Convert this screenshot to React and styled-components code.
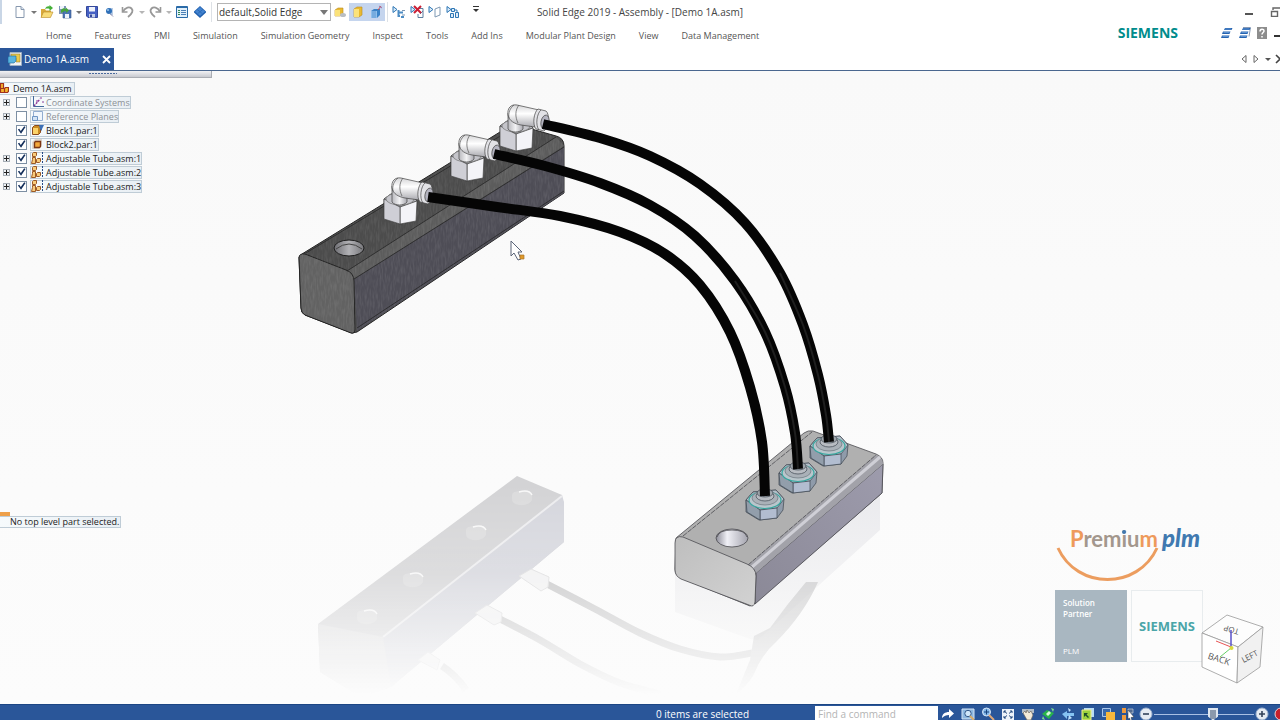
import React from "react";
import styled, { createGlobalStyle, css } from "styled-components";

const GlobalStyle = createGlobalStyle`
  *, *::before, *::after {
    box-sizing: border-box;
  }
  body {
    margin: 0;
    background: #fff;
    color: #444;
    font-family: "Open Sans", "Noto Sans", sans-serif;
    font-size: 9px;
  }
  button {
    margin: 0;
    padding: 0;
    border: 0;
    background: none;
    font: inherit;
    color: inherit;
  }
  svg {
    display: block;
    flex: none;
  }
`;

const Page = styled.div`
  display: flex;
  flex-direction: column;
  min-height: 100vh;
  overflow: hidden;
`;

/* ---------- title bar ---------- */

const TitleBar = styled.header`
  display: grid;
  grid-template-columns: 1fr auto 1fr;
  align-items: center;
  height: 24px;
`;

const QuickAccess = styled.div`
  display: flex;
  align-items: center;
`;

const AppEdge = styled.span`
  width: 2px;
  height: 24px;
  margin-right: 9px;
  background: #c9d6e6;
`;

const ToolButton = styled.button`
  display: flex;
  align-items: center;
  justify-content: center;
  width: ${p => p.$w || 18}px;
  height: 18px;
`;

const Caret = styled.span`
  border: 3px solid transparent;
  border-top-color: ${p => p.$color || "#777"};
  border-bottom: 0;
`;

const Divider = styled.span`
  width: 1px;
  height: 20px;
  margin: 0 2px;
  background: #dde1e6;
`;

const ConfigBox = styled.label`
  position: relative;
  display: block;
  margin-left: 3px;

  &::after {
    content: "";
    position: absolute;
    right: 3px;
    top: 7px;
    border: 4px solid transparent;
    border-top: 5px solid #777;
    border-bottom: 0;
  }
`;

const ConfigSelect = styled.select`
  appearance: none;
  display: block;
  width: 114px;
  height: 18px;
  padding: 0 1px;
  border: 1px solid #b4b4b4;
  border-radius: 0;
  background: #fff;
  color: #333;
  font-family: inherit;
  font-size: 10px;
`;

const ActivePair = styled.div`
  display: flex;
  background: #c5d5ee;
`;

const Title = styled.h1`
  margin: 0;
  font-size: 10px;
  font-weight: 400;
  line-height: 14px;
  color: #444;
`;

const Controls = styled.div`
  display: flex;
  align-items: center;
  justify-content: flex-end;
  margin-left: auto;
`;

/* ---------- ribbon tabs ---------- */

const Ribbon = styled.div`
  display: flex;
  align-items: center;
  height: 23px;
  padding-left: 46px;
`;

const RibbonNav = styled.nav`
  display: flex;
  gap: 23px;
`;

const RibbonLink = styled.a`
  color: #555;
  font-size: 9px;
  line-height: 14px;
  text-decoration: none;
  white-space: nowrap;
`;

const Brand = styled.span`
  color: ${p => p.$color || "#008c8c"};
  font-size: ${p => p.$size || 14}px;
  font-weight: 700;
  line-height: 16px;
`;

const RibbonRight = styled(Controls)`
  align-self: flex-start;
  gap: 7px;
`;

const BrandSlot = styled.div`
  margin-right: 36px;
`;

/* ---------- document tabs ---------- */

const TabBar = styled.div`
  display: flex;
  align-items: stretch;
  height: 24px;
  padding-top: 1px;
  border-bottom: 1px solid #4a678f;
`;

const DocTab = styled.div`
  display: flex;
  align-items: center;
  gap: 2px;
  width: 114px;
  padding: 0 3px 0 8px;
  background: #2a5699;
  color: #fff;
  font-size: 10px;
`;

const DocName = styled.span`
  flex: 1;
  white-space: nowrap;
`;

/* ---------- 3d view ---------- */

const Viewport = styled.main`
  position: relative;
  flex: 1;
  display: grid;
  background: linear-gradient(#f9f9f9, #fcfcfc);
`;

const SceneSvg = styled.svg`
  grid-area: 1 / 1;
  width: 100%;
  height: 100%;
`;

const PathFinder = styled.aside`
  position: absolute;
  left: 0;
  top: 0;
`;

const PanelGrip = styled.div`
  display: flex;
  justify-content: center;
  width: 212px;
  height: 7px;
  padding: 2px 6px 0 0;
  border: 1px solid #aaadb3;
  border-width: 0 1px 1px 0;
  background: linear-gradient(#f2f2f4, #c8cad0);

  &::before {
    content: "";
    width: 28px;
    height: 1px;
    background: repeating-linear-gradient(90deg, #4a6a9c 0 2px, transparent 2px 3px);
  }
`;

const labelBox = css`
  border: 1px solid #bfccd6;
  background: linear-gradient(90deg, #f6fafc, #e9eff4);
`;

const Tree = styled.ul`
  margin: 3px 0 0;
  padding: 0;
  list-style: none;
`;

const TreeRow = styled.li`
  display: flex;
  align-items: center;
  height: 14px;
`;

const Expander = styled.button`
  display: flex;
  align-items: center;
  justify-content: center;
  width: 7px;
  height: 7px;
  margin: 0 6px 0 3px;
  visibility: ${p => (p.$hidden ? "hidden" : "visible")};
  border: 1px solid #a5adb5;
  background: #eef1f4;
`;

const Tick = styled.input`
  appearance: none;
  display: block;
  width: 11px;
  height: 11px;
  margin: 0 3px 0 0;
  border: 1px solid #7d8fa3;
  background: #fff;

  &:checked::after {
    content: "";
    display: block;
    width: 9px;
    height: 9px;
    background: #16305c;
    clip-path: polygon(10% 45%, 25% 35%, 42% 60%, 80% 8%, 95% 18%, 45% 92%);
  }
`;

const TreeLabel = styled.label`
  ${labelBox}
  display: flex;
  align-items: center;
  gap: 2px;
  height: 13px;
  padding: 0;
  color: ${p => (p.$dim ? "#8d9196" : "#222")};
  font-size: 9px;
  line-height: 11px;
  white-space: nowrap;
`;

const RootLabel = styled(TreeLabel)`
  gap: 4px;
  padding-right: 2px;
  border-left: 0;
`;

const Prompt = styled.div`
  position: absolute;
  left: 0;
  bottom: 176px;
`;

const PromptMark = styled.div`
  width: 10px;
  height: 4px;
  background: #eea04a;
`;

const PromptText = styled.p`
  ${labelBox}
  margin: 0;
  padding: 0 1px 0 10px;
  border-left: 0;
  color: #222;
  font-size: 9px;
  line-height: 10px;
`;

const Partners = styled.section`
  position: absolute;
  right: 69px;
  bottom: 42px;
  display: flex;
  flex-direction: column;
  gap: 8px;
`;

const Cards = styled.div`
  display: flex;
  gap: 4px;
`;

const Card = styled.div`
  display: flex;
  width: 72px;
  height: 72px;
  ${p =>
    p.$filled
      ? css`
          flex-direction: column;
          justify-content: space-between;
          padding: 7px 8px 6px;
          background: #a9b7c1;
          color: #fff;
          font-size: 8px;
          line-height: 11px;
        `
      : css`
          align-items: center;
          justify-content: center;
          border: 1px solid #e8ecee;
          background: #fcfcfc;
        `}
`;

const CardTitle = styled.strong`
  font-weight: 600;
`;

const ViewCube = styled.svg`
  position: absolute;
  right: 15px;
  bottom: 18px;
`;

/* ---------- status bar ---------- */

const StatusBar = styled.footer`
  display: flex;
  justify-content: flex-end;
  align-items: flex-start;
  height: 16px;
  overflow: hidden;
  border-top: 1px solid #1c4684;
  background: #2a5699;
  color: #fff;
`;

const StatusText = styled.span`
  margin: 2px 66px 0 0;
  font-size: 10px;
  line-height: 14px;
`;

const FindInput = styled.input`
  width: 123px;
  height: 16px;
  margin-top: 1px;
  padding: 0 3px;
  border: 0;
  border-radius: 0;
  background: #fff;
  color: #333;
  font-family: inherit;
  font-size: 10px;

  &::placeholder {
    color: #b4b4b4;
    opacity: 1;
  }
`;

const StatusButton = styled.button`
  display: flex;
  justify-content: center;
  width: ${p => p.$w || 20}px;
  height: 16px;
  padding-top: 2px;
`;

const ZoomSlider = styled.input`
  appearance: none;
  width: 100px;
  height: 14px;
  margin: 2px 0 0;
  background: linear-gradient(#a9c0e4, #a9c0e4) center / 100% 1px no-repeat;

  &::-webkit-slider-thumb {
    appearance: none;
    width: 10px;
    height: 13px;
    border: 2px solid #dfe6ef;
    background: #8b99ac;
    clip-path: polygon(0 0, 100% 0, 100% 70%, 50% 100%, 0 70%);
  }
`;

/* ---------- icons ---------- */

const Icon = ({ s = 14, w, children }) => (
  <svg width={w || s} height={s} viewBox={`0 0 ${w || s} ${s}`} fill="none" aria-hidden="true">
    {children}
  </svg>
);

const NewIcon = () => (
  <Icon>
    <path d="M3 1.500h5l3 3v8H3z" fill="#fff" stroke="#8798ae" />
    <path d="M8 1.500v3h3" fill="#dbe5f2" stroke="#8798ae" />
  </Icon>
);
const OpenIcon = () => (
  <Icon>
    <path d="M1 4h4l1 1.500h5V12H1z" fill="#d9a93a" />
    <path d="M3.500 7H13l-2.500 5.500H1z" fill="#f8dc78" stroke="#b98a26" strokeWidth=".6" />
    <path d="M5 4c1-2.500 3-3 4.500-2.500V0L13 3 9.500 6V4C8 3.400 7 3.500 5 4z" fill="#45b038" />
  </Icon>
);
const SaveAsIcon = () => (
  <Icon>
    <path d="M1 1h7v8H1z" fill="#7e93b8" />
    <path d="M2 1h4v3H2z" fill="#eef3fa" />
    <path d="M5 5h8v8H5z" fill="#4c75b4" stroke="#35558a" strokeWidth=".6" />
    <path d="M7 9h4v4H7z" fill="#eef3fa" />
    <path d="M3 5c2-2 3-2 5-1V2.500L11 5.500 8 8V6C6 6 5 7 3 8z" fill="#47a53c" />
  </Icon>
);
const SaveIcon = () => (
  <Icon s={12}>
    <path d="M.5.5h11v11H2L.5 10z" fill="#4661c4" stroke="#34489b" />
    <path d="M3 1h6v4.500H3z" fill="#eef2fb" />
    <path d="M3 8h6v3.500H3z" fill="#c4cee8" />
    <path d="M4 8.500h2V11H4z" fill="#34489b" />
  </Icon>
);
const SphereIcon = () => (
  <Icon s={12}>
    <path d="M6 2h3v7H6z" fill="#b9cde6" />
    <circle cx="5" cy="5" r="3" fill="#2f70b8" />
    <circle cx="4" cy="4" r="1" fill="#9dc7ee" />
    <path d="M6 7.500l3 3" stroke="#88a" />
  </Icon>
);
const UndoIcon = ({ flip }) => (
  <Icon>
    <g transform={flip ? "matrix(-1 0 0 1 14 0)" : undefined}>
      <path d="M1.500 2v5h5" stroke="#989898" strokeWidth="1.600" />
      <path d="M2 6.500C4.500 2 8.500 1.500 10.500 3.500s1 5-3.500 8.500" stroke="#989898" strokeWidth="1.800" />
    </g>
  </Icon>
);
const ListIcon = () => (
  <Icon s={12}>
    <path d="M.5.5h11v11H.5z" fill="#e3f0fa" stroke="#2b6ba8" />
    <path d="M.5 1.500h11" stroke="#2b6ba8" />
    <path d="M2 4.500h2M2 6.500h2M2 8.500h2" stroke="#2f8a50" />
    <path d="M5 4.500h5M5 6.500h5M5 8.500h5" stroke="#4c80b6" />
  </Icon>
);
const DiamondIcon = () => (
  <Icon s={12}>
    <path d="M0 5.500L6 0l6 5.500v1L6 12 0 6.500z" fill="#1f5fae" />
    <path d="M1 5.500L6 1l5 4.500L6 10z" fill="#4383cf" />
    <path d="M3 3.300l5.500 4.500M9 3.300L3.500 7.800" stroke="#2c6cb8" />
  </Icon>
);
const BoxIcon = ({ tall }) => (
  <Icon s={12}>
    <path
      d={tall ? "M2 3l3-2h5v8l-3 2H2z" : "M1 4l3-2h5v6L6 10H1z"}
      fill="#e9b930"
      stroke="#b98a20"
      strokeWidth=".6"
    />
    <path d={tall ? "M2 3h5v8H2z" : "M1 4h5v6H1z"} fill="#fbe27a" />
    {!tall && <ellipse cx="9" cy="9" rx="3" ry="2" fill="#b9bec4" />}
  </Icon>
);
const BlueBoxIcon = () => (
  <Icon>
    <path d="M2 6l3-2h6v6l-3 3H2z" fill="#3a83c8" />
    <path d="M2 6h6v7H2z" fill="#8fc0ec" />
    <path d="M4 6v7M6 6v7" stroke="#5c97d2" />
    <path d="M9 5l3-4" stroke="#d14b4b" />
    <path d="M10 1l3 2" stroke="#9b6ea8" />
  </Icon>
);
const RelateIcon = ({ kind }) => (
  <Icon>
    <path d="M1 1.500v6L5 4.500z" fill="#dcebf8" stroke="#2d76b5" />
    {kind === "axis" && (
      <>
        <path d="M6.500 5v6H8M7 7.500h4M9 12h3" stroke="#4c8cc4" strokeWidth="2" />
        <path d="M10 5.500h3M10 10h3" stroke="#7d97b2" />
      </>
    )}
    {kind === "delete" && (
      <>
        <path d="M8 3.500h5v9H8V9M10 9l3-3" stroke="#5c7d9e" />
        <path d="M4 1l7 7M11 1L4 8" stroke="#cb1f35" strokeWidth="2" />
      </>
    )}
    {kind === "plane" && <path d="M7 4l5-2v8l-5 2z" stroke="#7f99b3" />}
    {kind === "group" && (
      <>
        <path d="M5.500 3.500h3v3h-3zM4.500 8.500h3v4h-3zM9.500 7.500h3v5h-3z" fill="#dcebf8" stroke="#2d76b5" />
        <path d="M8 5h3v2" stroke="#2d76b5" />
      </>
    )}
  </Icon>
);
const MoreIcon = () => (
  <Icon s={12} w={8}>
    <path d="M1 .5h6" stroke="#333" />
    <path d="M1 3h6L4 6z" fill="#333" />
  </Icon>
);
const StackIcon = ({ outline }) => (
  <Icon s={12}>
    {outline && <path d="M4 .5h7.500L10 9.500" stroke="#8a9bb5" />}
    <path d="M4 1h7.500l-1 2H3zM2 4.500h7.500l-1 2.500H1zM1 8.500h7.500L7.500 11H0z" fill="#2563b0" />
    <path d="M4 2h6M2.500 5.500h6M1.500 9.500h6" stroke="#7fb0e6" strokeWidth=".6" />
  </Icon>
);
const DocIcon = () => (
  <Icon>
    <path d="M2 .5h11.500v13H2z" fill="#eef2f6" stroke="#9fb0c2" />
    <path d="M3 2h9v8H8V6H3z" fill="#e9c94b" stroke="#8c7728" strokeWidth=".5" />
    <path d="M0 5l2-1h6v5l-2 2H0z" fill="#58b4e0" stroke="#1d6a9a" strokeWidth=".6" />
  </Icon>
);
const AsmIcon = () => (
  <Icon s={12} w={9}>
    <path
      d="M.5 1.500h3v5h-3zM.5 6.500h4v4h-4zM4.500 6.500l1-1h3v4l-1 1h-3z"
      fill="#f6b62e"
      stroke="#a2321c"
      strokeWidth="1.200"
    />
  </Icon>
);
const TubeIcon = () => (
  <Icon s={12} w={13}>
    <path
      d="M1.500 1.500l1-1h3v3l-1 1h-3zM1.500 7.500v-2h3v6h-4zM5.500 7.500l1-1h3v3l-1 1h-3z"
      fill="#f9cd7c"
      stroke="#9c5a26"
    />
    <path d="M11.500 0v12" stroke="#274a86" strokeDasharray="2 1" />
  </Icon>
);
const AxesIcon = () => (
  <Icon s={12} w={13}>
    <path d="M2.500 0v10.500H13" stroke="#42689c" />
    <path d="M3 10l6-7" stroke="#8d3c9a" strokeWidth="1.400" strokeDasharray="2 1" />
    <path d="M9 2h2M11 6h2M5 5h2" stroke="#8d3c9a" />
  </Icon>
);
const PlanesIcon = () => (
  <Icon s={12} w={13}>
    <path d="M2.500 1.500h9v9h-9z" fill="#f0f6fc" stroke="#92add0" />
    <path d="M1.500 6.500h5v4h-5z" fill="#d3e4f6" stroke="#6f96c4" />
  </Icon>
);
const PartIcon = ({ grounded }) =>
  grounded ? (
    <Icon s={12} w={13}>
      <path d="M1.500 3.500l2-2h6v7l-2 2h-6z" fill="#c98b22" stroke="#8a4a1e" />
      <path d="M2 4h5v6H2z" fill="#fbd36a" />
      <path d="M8 1h5l-2 4v2L9 5z" fill="#3b6fb5" />
    </Icon>
  ) : (
    <Icon s={12} w={13}>
      <path d="M1 4l3-3h7v6l-3 4H1z" fill="#dfd8cf" />
      <path d="M3.500 4.500l1-1h5v5l-1 1h-5z" fill="#f3a83b" stroke="#7c3714" strokeWidth="1.400" />
    </Icon>
  );

const statusIcons = [
  ["Go", <path d="M1 11c0-4 3-6 7-6V2l5 4.500L8 11V8C5 8 3 9 1 11z" fill="#fff" />],
  ["Zoom area", (
    <>
      <path d="M1 2h12v10H1z" fill="#8db7e0" stroke="#d5e4f4" />
      <circle cx="7" cy="6.500" r="3.200" fill="#cfe6fa" stroke="#33588a" />
      <path d="M9 9l4 4" stroke="#d9ad6a" strokeWidth="2" />
    </>
  )],
  ["Zoom", (
    <>
      <circle cx="5.500" cy="5" r="4" fill="#84b8ea" stroke="#d7e7f7" />
      <path d="M5.500 2.500v5M3 5h5" stroke="#17427e" />
      <path d="M8 8l5 5" stroke="#e0a878" strokeWidth="2" />
    </>
  )],
  ["Fit", (
    <>
      <path d="M1 2h12v11H1z" fill="#edf3fa" />
      <path d="M3 4l3 2.500M11 4L8 6.500M3 11l3-2.500M11 11L8 8.500M5 4H3v2M9 4h2v2M3 9v2h2M11 9v2H9" stroke="#254a7e" />
    </>
  )],
  ["Pan", (
    <>
      <path d="M1 2h12v4H1z" fill="#b2bdc9" />
      <path d="M2 6l2-2 1 2 1-3 2 3 2-2 2 4-2 5H6z" fill="#f3ead9" stroke="#706860" strokeWidth=".7" />
    </>
  )],
  ["Rotate", (
    <>
      <path d="M1 7l5-4 7 3-5 6z" fill="#27b34a" />
      <path d="M5 7l3-3 2 2-3 3z" fill="#d8f8dd" />
      <path d="M10 1l3 1-1 3zM4 13l-3-1 1-3z" fill="#7fe08c" />
    </>
  )],
  ["Look at face", (
    <>
      <path d="M1 7l5-3v2h7v3H6v3z" fill="#86c3f2" />
      <path d="M7 1l3 2-2 2zM7 13l4-2-3-3z" fill="#bfe0fa" />
    </>
  )],
  ["Views", (
    <>
      <path d="M3 1h10v9H3z" fill="#b8dcf6" />
      <path d="M1 3h9v10H1z" fill="#9bd13c" stroke="#f1ec8c" />
      <path d="M3 6h4L5.500 7.500 8 10l-1 1-2.500-2.500L3 10z" fill="#1e4f28" />
    </>
  )],
  ["Styles", (
    <>
      <path d="M1.500 1.500h8v8h-8z" fill="#3a69ab" stroke="#a9c6ea" />
      <path d="M5 5h9v9H5z" fill="#f8b83d" />
    </>
  )],
  ["Selection", (
    <>
      <path d="M1 1h4v5H1zM1 8h4v5H1z" fill="#ee9a3d" />
      <path d="M7 2h5v4H7z" fill="#526b90" stroke="#c6cfdc" strokeWidth=".7" />
      <path d="M7 3l6 7-3 .5 1 3-1.500.5-1-3L7 12z" fill="#fff" stroke="#333" strokeWidth=".5" />
    </>
  )]
];

const RoundIcon = ({ plus }) => (
  <Icon>
    <circle cx="7" cy="7" r="6" fill="#e6ebf2" stroke="#9eb2cf" />
    <path d={plus ? "M4 7h6M7 4v6" : "M4 7h6"} stroke="#34435a" strokeWidth="1.600" />
  </Icon>
);

/* ---------- scene ---------- */

// catmull-rom through the points, as cubic beziers
const smooth = pts => {
  let d = `M${pts[0]}`;
  for (let i = 0; i < pts.length - 1; i++) {
    const [a, b, c, e] = [pts[i - 1] || pts[i], pts[i], pts[i + 1], pts[i + 2] || pts[i + 1]];
    const c1 = [b[0] + (c[0] - a[0]) / 6, b[1] + (c[1] - a[1]) / 6];
    const c2 = [c[0] - (e[0] - b[0]) / 6, c[1] - (e[1] - b[1]) / 6];
    d += `C${c1} ${c2} ${c}`;
  }
  return d;
};

const tubes = [
  [[543, 124], [600, 138], [650, 156], [700, 184], [745, 223], [780, 273], [803, 325], [818, 375], [826, 415], [829, 442]],
  [[494, 154], [545, 166], [600, 183], [650, 205], [695, 236], [735, 281], [765, 332], [785, 387], [795, 433], [798, 469]],
  [[428, 197], [497, 207], [560, 216], [620, 232], [665, 254], [700, 285], [730, 332], [750, 387], [762, 442], [765, 496]]
];

const upperOutline =
  "M302 254L500 132l14-8 42 12q8 2 8 10v47L357 332l-5 1-47-18q-4-2-4-7l-2-51z";

const Elbow = ({ x = 0, y = 0 }) => (
  <g transform={`translate(${x} ${y})`} stroke="#444" strokeWidth=".7" strokeLinejoin="round">
    <path d="M384 199v20l16 5 16-3 1-20-6-6-20-1z" fill="#c8c8cd" />
    <path d="M384 199l7-5 20 1 6 6-17 6z" fill="#b5b5ba" />
    <path d="M400 207v17l16-3 1-20z" fill="#f4f4f8" />
    <path d="M384 199l16 8v17l-16-5z" fill="#cfcfd6" />
    <ellipse cx="400" cy="199" rx="14" ry="6" fill="#c4c4ca" stroke="#777" />
    <path d="M392 186v16c3 4 12 4 15 0v-14z" fill="url(#elbowV)" />
    <path d="M392 188c-1-7 3-11 9-10l22 5-4 17-14-2c-6-1-12-4-13-10z" fill="url(#elbowH)" />
    <path d="M403 178c-4 5-4 12-1 18M398 178c-4 3-6 8-5 13" fill="none" stroke="#555" />
    <path d="M422 182l8 2c4 3 3 17-2 20l-8-2c-4-5-2-17 2-20z" fill="#e2e2e6" />
    <path d="M425 183c-4 3-6 15-2 20" fill="none" />
    <ellipse cx="429" cy="195" rx="4" ry="7" fill="#b4b4c0" transform="rotate(12 429 195)" />
  </g>
);

const Nut = ({ x = 0, y = 0 }) => (
  <g transform={`translate(${x} ${y})`} stroke="#3d4650" strokeWidth=".7" strokeLinejoin="round">
    <path d="M746 500l7-8 23-2 8 9-1 11-6 8-18 2-13-8z" fill="#8f9baa" />
    <path d="M746 500l14 10 17-2 7-9-8-9-23 2z" fill="#b4bec8" />
    <path d="M760 510v10l17-2v-10z" fill="#b2bdd0" />
    <path d="M746 500l14 10v10l-13-8z" fill="#929eab" />
    <ellipse cx="765" cy="500" rx="16" ry="8.500" fill="#b9c6cc" stroke="#36a8a0" strokeWidth="1.200" />
    <ellipse cx="765" cy="498" rx="13" ry="7" fill="#aab1b8" stroke="#6d7780" />
    <ellipse cx="765" cy="496" rx="9" ry="5" fill="#b8bcc2" />
    <ellipse cx="765" cy="493" rx="8" ry="4" fill="#9fa5ab" />
  </g>
);

const Scene = () => (
  <SceneSvg viewBox="0 71 1280 633" role="img" aria-label="Two blocks joined by three tubes">
    <defs>
      <linearGradient id="elbowV">
        <stop offset="0" stopColor="#b8b8bd" />
        <stop offset=".5" stopColor="#f2f2f4" />
        <stop offset="1" stopColor="#a9a9b0" />
      </linearGradient>
      <linearGradient id="elbowH" x1="0" y1="0" x2="0" y2="1">
        <stop offset="0" stopColor="#d4d4d6" />
        <stop offset=".4" stopColor="#fff" />
        <stop offset="1" stopColor="#aaaab0" />
      </linearGradient>
      <linearGradient id="bore">
        <stop offset="0" stopColor="#8d8d98" />
        <stop offset=".35" stopColor="#f0f0f6" />
        <stop offset="1" stopColor="#a4a4ae" />
      </linearGradient>
      <linearGradient id="darkBore">
        <stop offset="0" stopColor="#6d6d72" />
        <stop offset=".5" stopColor="#b2b2b6" />
        <stop offset="1" stopColor="#77777b" />
      </linearGradient>
      <linearGradient id="lightSide" x1="0" y1="1" x2="1" y2="0">
        <stop offset="0" stopColor="#8b8997" />
        <stop offset="1" stopColor="#9d9bac" />
      </linearGradient>
      <linearGradient id="lightFront" x1="0" y1="0" x2="1" y2="1">
        <stop offset="0" stopColor="#bebebe" />
        <stop offset="1" stopColor="#d2d2d2" />
      </linearGradient>
      <linearGradient id="lightFloor" x1="0" y1="0" x2="0" y2="1">
        <stop offset="0" stopColor="#e6e6ea" />
        <stop offset="1" stopColor="#f8f8f8" />
      </linearGradient>
      <linearGradient id="fade" gradientUnits="userSpaceOnUse" x1="0" y1="476" x2="0" y2="695">
        <stop offset="0" stopColor="#fff" />
        <stop offset=".45" stopColor="#bbb" />
        <stop offset=".8" stopColor="#444" />
        <stop offset="1" stopColor="#000" />
      </linearGradient>
      <mask id="floor" maskUnits="userSpaceOnUse" x="0" y="470" width="1280" height="234">
        <path d="M0 470h1280v234H0z" fill="url(#fade)" />
      </mask>
      <filter id="brushed" x="0" y="0" width="1" height="1">
        <feTurbulence type="fractalNoise" baseFrequency=".6 .12" numOctaves="2" seed="4" />
        <feColorMatrix values="0 0 0 0 1  0 0 0 0 1  0 0 0 0 1  1.200 0 0 0 -.45" />
        <feComposite in2="SourceGraphic" operator="in" />
      </filter>
    </defs>

    {/* floor reflection */}
    <path d="M675 574v38l75 27 8 1 122-110v-38L755 600z" fill="url(#lightFloor)" opacity=".8" />
    <g mask="url(#floor)">
      <g fill="none" stroke="#c4c4c5" strokeWidth="7">
        <path d={smooth([[545, 583], [595, 609], [640, 633], [680, 649], [720, 657], [752, 653]])} />
        <path d={smooth([[500, 619], [540, 640], [580, 664], [620, 683], [660, 694]])} />
        <path d="M442 666q15 10 24 24" />
      </g>
      <path d="M818 582q-14 32-42 60-14 12-22 32-8 14-18 20l14-34 4-24 16-8 18-24 18-22z" fill="#cdcdce" />
      <path d="M318 624L517 476l45 19 2 47-173 145-30 10-41-25z" fill="#d2d2d4" />
      <path d="M383 637L562 495l2 7v40L391 687z" fill="#d3d4db" />
      <path d="M383 637L562 496" stroke="#ececee" strokeWidth="2" />
      <path d="M318 624l65 13 8 50-30 10-41-25z" fill="#dcdcdd" />
      {[[522, 498], [476, 533], [413, 580], [367, 617]].map(([x, y]) => (
        <g key={x}>
          <path d={`M${x - 10} ${y - 3}q0-4 10-4t10 4v5q-3 6-13 5-7-1-7-6z`} fill="#dadadb" />
          <path d={`M${x - 3} ${y - 6}q10-3 13 3`} fill="none" stroke="#f8f8f8" strokeWidth="1.500" />
        </g>
      ))}
      <g fill="#f1f1f2" stroke="#dcdcdd">
        <path d="M519 576l12-7 18 8-1 10-7 4z" />
        <path d="M475 613l12-8 15 8-1 9-7 3z" />
        <path d="M418 660l10-8 12 8-3 10z" />
      </g>
    </g>

    {/* upper block */}
    <g strokeLinejoin="round">
      <path d={upperOutline} fill="#4c4c4c" stroke="#222" />
      <path d="M354 279L564 147v46L357 331z" fill="#4e4d56" />
      <path d="M347 271L556 137l8 9-210 133z" fill="#5c5c5c" />
      <path
        d="M299 258q0-5 6-4l41 16q8 3 8 11l1 48q0 5-4 4l-46-18q-4-2-4-7z"
        fill="#626262"
        stroke="#222"
      />
      <path d={upperOutline} filter="url(#brushed)" opacity=".15" />
      <path
        d="M306 253L502 135M347 271L556 137M354 279L564 147M357 328l207-137"
        fill="none"
        stroke="#262626"
        strokeWidth=".8"
      />
      <ellipse cx="349" cy="248" rx="15" ry="8" fill="url(#darkBore)" stroke="#1e1e1e" />
      <path d="M336 249q13-10 26 0" fill="none" stroke="#444" />
    </g>
    <Elbow x={116} y={-73} />
    <Elbow x={67} y={-43} />
    <Elbow />

    {/* lower block */}
    <g stroke="#4b4b50" strokeWidth=".8" strokeLinejoin="round">
      <path d="M676 538L804 433q4-3 9-2l63 23q7 3 7 9l-1 30-127 110-5 3-69-28q-6-3-6-9z" fill="#b0b0b0" />
      <path d="M756 573L883 464l-1 29-127 111z" fill="url(#lightSide)" />
      <path d="M748 565L876 455q6 2 7 9L756 573z" fill="#a2a2a9" stroke="none" />
      <path d="M752 567L880 457" stroke="#cfcfd6" strokeWidth="3" />
      <path d="M748 565L876 455M683 536L812 432" strokeDasharray="5 1" />
      <path d="M675 543q0-8 8-6l64 27q9 4 9 12l-1 26q-1 6-6 3l-68-26q-6-3-6-9z" fill="url(#lightFront)" />
      <ellipse cx="732" cy="538" rx="16" ry="9" fill="url(#bore)" />
      <path d="M717 537q2-7 15-7t15 7" fill="none" />
    </g>
    <Nut x={64} y={-54} />
    <Nut x={33} y={-27} />
    <Nut />

    <g fill="none">
      {tubes.map((t, i) => (
        <React.Fragment key={i}>
          <path d={smooth(t)} stroke="#050505" strokeWidth="10" />
          {i < 2 && <path d={smooth(t.slice(5))} stroke="#1f1f1f" strokeWidth="2" />}
        </React.Fragment>
      ))}
    </g>

    {/* pointer */}
    <path d="M511 241v15l3-3 4 7 3-1-3-7h4z" fill="#fff" stroke="#5a6478" />
    <path d="M520 255h4v4h-4z" fill="#e09a2a" stroke="#a8742c" strokeWidth=".7" />
  </SceneSvg>
);

const PremiumLogo = () => (
  <svg width="156" height="56" viewBox="0 0 156 56" role="img" aria-label="Premium plm">
    <g fontFamily="Lato, sans-serif" fontSize="22" fontWeight="700">
      <text x="15" y="21" fill="#a3978d">
        <tspan fill="#ee9a5b">P</tspan>remiu<tspan fill="#ee9a5b">m</tspan>
      </text>
      <text x="107" y="21" fill="#4079b0" fontSize="24" fontStyle="italic" fontWeight="900">
        plm
      </text>
    </g>
    <circle cx="69" cy="6" r="2" fill="#4079b0" />
    <path d="M3 22C22 64 83 64 102 22" fill="none" stroke="#ec9d5f" strokeWidth="3" />
  </svg>
);

const Cube = () => (
  <ViewCube width="64" height="72" viewBox="1201 614 64 72" role="img" aria-label="View cube">
    <g stroke="#999" strokeWidth=".8" strokeLinejoin="round">
      <path d="M1227 615l36 12-25 20-36-14z" fill="#fdfdfd" />
      <path d="M1202 633l36 14-1 36-35-16z" fill="#fff" />
      <path d="M1238 647l25-20-3 40-23 16z" fill="#f1f1f1" />
    </g>
    <g fontFamily="Open Sans, sans-serif" fill="#555" textAnchor="middle">
      <text fontSize="8" transform="translate(1232 627) rotate(196)">TOP</text>
      <text fontSize="9" transform="translate(1218 662) rotate(18)">BACK</text>
      <text fontSize="8" transform="translate(1251 659) rotate(-28)">LEFT</text>
    </g>
    <path d="M1231 647V630" stroke="#5a52c8" strokeWidth="1.500" />
    <path d="M1231 647l-15-6" stroke="#e85555" />
    <path d="M1231 648l-11 9" stroke="#64d068" />
    <circle cx="1231.500" cy="648" r="2" fill="#d9dc3c" />
  </ViewCube>
);

/* ---------- data ---------- */

const ribbonTabs = [
  "Home", "Features", "PMI", "Simulation", "Simulation Geometry", "Inspect",
  "Tools", "Add Ins", "Modular Plant Design", "View", "Data Management"
];

const treeItems = [
  { name: "Coordinate Systems", icon: <AxesIcon />, expand: true, dim: true },
  { name: "Reference Planes", icon: <PlanesIcon />, expand: true, dim: true },
  { name: "Block1.par:1", icon: <PartIcon grounded />, checked: true },
  { name: "Block2.par:1", icon: <PartIcon />, checked: true },
  { name: "Adjustable Tube.asm:1", icon: <TubeIcon />, expand: true, checked: true },
  { name: "Adjustable Tube.asm:2", icon: <TubeIcon />, expand: true, checked: true },
  { name: "Adjustable Tube.asm:3", icon: <TubeIcon />, expand: true, checked: true }
];

const Tool = ({ label, w, children }) => (
  <ToolButton type="button" aria-label={label} $w={w}>
    {children}
  </ToolButton>
);

const DropTool = ({ label, color }) => (
  <Tool label={label} w={9}>
    <Caret $color={color} />
  </Tool>
);

const App = () => (
  <Page>
    <GlobalStyle />
    <TitleBar>
      <QuickAccess>
        <AppEdge />
        <Tool label="New"><NewIcon /></Tool>
        <DropTool label="New options" />
        <Tool label="Open"><OpenIcon /></Tool>
        <Tool label="Save as"><SaveAsIcon /></Tool>
        <DropTool label="Save options" />
        <Tool label="Save"><SaveIcon /></Tool>
        <Tool label="Preview"><SphereIcon /></Tool>
        <Tool label="Undo"><UndoIcon /></Tool>
        <DropTool label="Undo list" color="#b5b5b5" />
        <Tool label="Redo"><UndoIcon flip /></Tool>
        <DropTool label="Redo list" color="#b5b5b5" />
        <Tool label="Properties"><ListIcon /></Tool>
        <Tool label="Part library"><DiamondIcon /></Tool>
        <Divider />
        <ConfigBox>
          <ConfigSelect aria-label="Configuration" defaultValue="default,Solid Edge">
            <option>default,Solid Edge</option>
          </ConfigSelect>
        </ConfigBox>
        <Tool label="Display configuration"><BoxIcon /></Tool>
        <ActivePair>
          <Tool label="Show parts"><BoxIcon tall /></Tool>
          <Tool label="Show simplified"><BlueBoxIcon /></Tool>
        </ActivePair>
        <Divider />
        <Tool label="Relate axis"><RelateIcon kind="axis" /></Tool>
        <Tool label="Delete relationship"><RelateIcon kind="delete" /></Tool>
        <Tool label="Relate plane"><RelateIcon kind="plane" /></Tool>
        <Tool label="Relate group"><RelateIcon kind="group" /></Tool>
        <Tool label="Customize" w={28}><MoreIcon /></Tool>
      </QuickAccess>
      <Title>Solid Edge 2019 - Assembly - [Demo 1A.asm]</Title>
      <Controls>
        <Tool label="Minimize" w={26}>
          <Icon s={8}><path d="M0 6h8" stroke="#555" strokeWidth="2" /></Icon>
        </Tool>
        <Tool label="Restore" w={18}>
          <Icon s={10} w={18}>
            <path d="M11 3V1h7M9.500 4.500h6v5h-6z" stroke="#666" strokeWidth="1.400" />
          </Icon>
        </Tool>
      </Controls>
    </TitleBar>

    <Ribbon>
      <RibbonNav>
        {ribbonTabs.map(tab => (
          <RibbonLink href="#" key={tab}>{tab}</RibbonLink>
        ))}
      </RibbonNav>
      <RibbonRight>
        <BrandSlot><Brand>SIEMENS</Brand></BrandSlot>
        <Tool label="Cascade" w={11}><StackIcon /></Tool>
        <Tool label="Tile" w={11}><StackIcon outline /></Tool>
        <Tool label="Help" w={10}>
          <Icon s={12} w={10}>
            <path d="M0 0h10v12H0z" fill="#8d8d8d" />
            <path d="M3 4.500c0-3 4-3 4-.5 0 1.500-2 1.500-2 3.500M5 9v1.500" stroke="#fff" strokeWidth="1.500" />
          </Icon>
        </Tool>
        <Tool label="Minimize document" w={6}>
          <Icon s={12} w={6}><path d="M0 9h6" stroke="#333" strokeWidth="2" /></Icon>
        </Tool>
      </RibbonRight>
    </Ribbon>

    <TabBar>
      <DocTab>
        <DocIcon />
        <DocName>Demo 1A.asm</DocName>
        <Tool label="Close Demo 1A.asm" w={9}>
          <Icon s={9}><path d="M1 1l7 7M8 1L1 8" stroke="#fff" strokeWidth="1.800" /></Icon>
        </Tool>
      </DocTab>
      <Controls>
        <Tool label="Previous tab" w={13}>
          <Icon s={10}><path d="M7 1.500v7L3 5z" stroke="#666" /></Icon>
        </Tool>
        <Tool label="Next tab" w={12}>
          <Icon s={10}><path d="M3 1.500v7L7 5z" stroke="#666" /></Icon>
        </Tool>
        <Tool label="Tab list" w={12}>
          <Caret $color="#555" />
        </Tool>
        <Tool label="Close tab" w={6}>
          <Icon s={10} w={6}><path d="M2 1l4 4-4 4" stroke="#444" strokeWidth="1.600" /></Icon>
        </Tool>
      </Controls>
    </TabBar>

    <Viewport>
      <Scene />
      <PathFinder>
        <PanelGrip />
        <Tree>
          <TreeRow>
            <RootLabel as="span"><AsmIcon />Demo 1A.asm</RootLabel>
          </TreeRow>
          {treeItems.map(item => (
            <TreeRow key={item.name}>
              <Expander type="button" aria-label={`Expand ${item.name}`} $hidden={!item.expand}>
                <Icon s={5}><path d="M0 2.500h5M2.500 0v5" stroke="#222" /></Icon>
              </Expander>
              <Tick type="checkbox" id={item.name} defaultChecked={item.checked} />
              <TreeLabel htmlFor={item.name} $dim={item.dim}>
                {item.icon}
                {item.name}
              </TreeLabel>
            </TreeRow>
          ))}
        </Tree>
      </PathFinder>

      <Prompt>
        <PromptMark />
        <PromptText>No top level part selected.</PromptText>
      </Prompt>

      <Partners>
        <PremiumLogo />
        <Cards>
          <Card $filled>
            <CardTitle>Solution<br />Partner</CardTitle>
            <span>PLM</span>
          </Card>
          <Card><Brand $color="#4aa5a8" $size={13}>SIEMENS</Brand></Card>
        </Cards>
      </Partners>
      <Cube />
    </Viewport>

    <StatusBar>
      <StatusText>0 items are selected</StatusText>
      <FindInput type="text" aria-label="Find a command" placeholder="Find a command" />
      {statusIcons.map(([label, drawing]) => (
        <StatusButton type="button" aria-label={label} key={label}>
          <Icon>{drawing}</Icon>
        </StatusButton>
      ))}
      <StatusButton type="button" aria-label="Zoom out" $w={16}><RoundIcon /></StatusButton>
      <ZoomSlider type="range" aria-label="Zoom" defaultValue="60" />
      <StatusButton type="button" aria-label="Zoom in" $w={16}><RoundIcon plus /></StatusButton>
      <StatusButton type="button" aria-label="Record" $w={10}>
        <Icon w={10}>
          <circle cx="11" cy="7" r="6" fill="#c8202c" stroke="#f0d0d0" />
        </Icon>
      </StatusButton>
    </StatusBar>
  </Page>
);

export default App;
